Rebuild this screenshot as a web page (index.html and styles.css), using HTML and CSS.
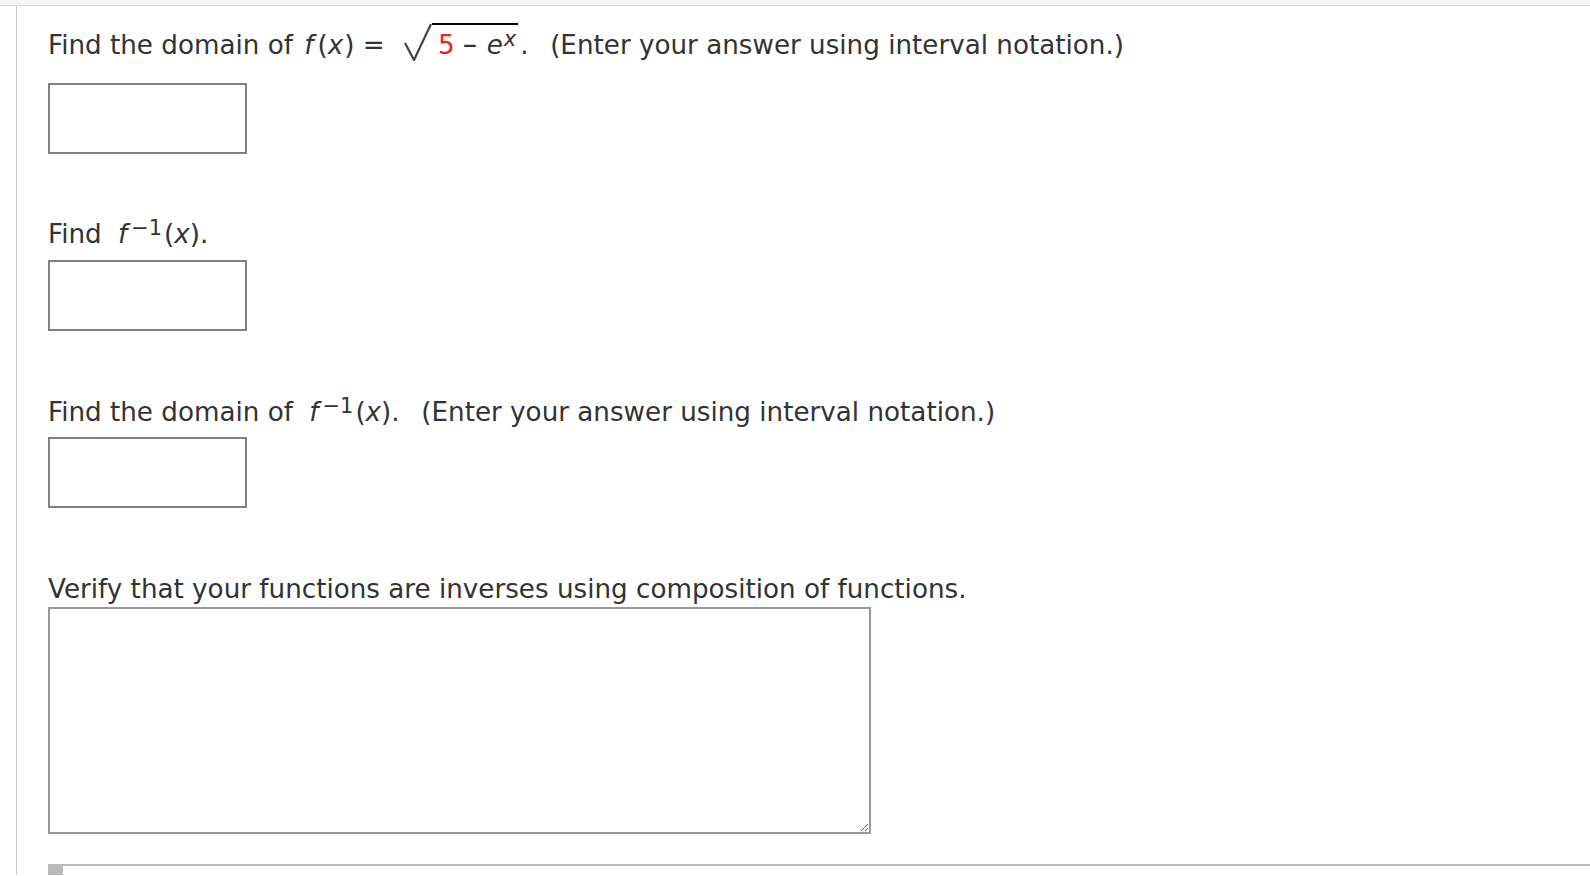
FILE: index.html
```html
<!DOCTYPE html>
<html>
<head>
<meta charset="utf-8">
<link rel="stylesheet" href="styles.css">
</head>
<body>
<div class="topband"></div>
<div class="page">
  <div class="question q1">
    <p class="prompt">Find the domain of <span class="math m1"><i class="fn">f</i>(<i class="xv">x</i>) = <span class="sqrt"><svg class="radic" width="28" height="38" viewBox="0 0 28 38"><path d="M1 20 L10 37 L27 1" fill="none" stroke="#444" stroke-width="2.2" stroke-linejoin="miter"/></svg><span class="radicand"><span class="red">5</span><span class="op">−</span><i>e</i><sup class="supx"><i>x</i></sup></span></span></span><span class="dot d1">.</span>&nbsp;&nbsp;(Enter your answer using interval notation.)</p>
    <input class="answer" type="text">
  </div>
  <div class="question q2">
    <p class="prompt">Find <span class="math"><i class="fn">f</i><sup>−1</sup>(<i>x</i>)</span>.</p>
    <input class="answer" type="text">
  </div>
  <div class="question q3">
    <p class="prompt">Find the domain of <span class="math"><i class="fn">f</i><sup>−1</sup>(<i>x</i>)</span><span class="dot">.</span>&nbsp;&nbsp;(Enter your answer using interval notation.)</p>
    <input class="answer" type="text">
  </div>
  <div class="question q4">
    <p class="prompt">Verify that your functions are inverses using composition of functions.</p>
    <textarea class="essay"></textarea>
  </div>
  <div class="nextsection"><div class="tab"></div></div>
</div>
</body>
</html>
```

FILE: styles.css
```css
html, body {
  margin: 0;
  padding: 0;
  background: #ffffff;
  overflow: hidden;
}
body {
  font-family: "DejaVu Sans", Verdana, sans-serif;
  color: #333333;
  font-size: 26.2px;
}
.topband {
  height: 5px;
  background: #f7f7f7;
  border-bottom: 1px solid #dddddd;
}
.page {
  margin-left: 16px;
  border-left: 1px solid #cccccc;
  padding-left: 31px;
  padding-top: 24px;
}
.prompt {
  margin: 0;
  line-height: 30px;
  white-space: nowrap;
}
.question { margin-bottom: 66px; }
.q1 { margin-bottom: 65px; }
.q3 { margin-bottom: 66px; }
.q4 { margin-bottom: 30px; }
.q1 .prompt { margin-bottom: 22px; }
.q2 .prompt { margin-bottom: 11px; }
.q3 .prompt { margin-bottom: 10px; }
.q4 .prompt { margin-bottom: 3px; }
.math {
  margin-left: 8px;
}
.math.m1 {
  margin-left: 3px;
}
.math i {
  font-style: italic;
}
.math .fn {
  padding-right: 4px;
}
.math .xv {
  padding-right: 1px;
}
.math sup {
  font-size: 0.8em;
  line-height: 0;
  vertical-align: 0.36em;
  margin-right: 2px;
}
.sqrt {
  margin-left: 11px;
  white-space: nowrap;
}
.radic {
  display: inline-block;
  vertical-align: -7px;
  margin-top: -14px;
}
.radicand {
  border-top: 2px solid #000000;
  padding: 5px 0 0 6px;
}
.op {
  display: inline-block;
  transform: scaleX(0.7);
  margin: 0 6px 0 4px;
}
.supx {
  margin-left: 1px;
}
.dot {
  margin-right: 5px;
}
.dot.d1 {
  margin-left: 2px;
}
.red {
  color: #e8261c;
}
.answer {
  display: block;
  width: 199px;
  height: 71px;
  box-sizing: border-box;
  border: 2px solid #808080;
  margin: 0;
  padding: 0;
  outline: none;
}
.essay {
  display: block;
  width: 823px;
  height: 227px;
  box-sizing: border-box;
  border: 2px solid #999999;
  margin: 0;
  padding: 0;
  outline: none;
}
.nextsection {
  border-top: 2px solid #bbbbbb;
  height: 9px;
}
.tab {
  width: 15px;
  height: 9px;
  background: #bbbbbb;
}
```
